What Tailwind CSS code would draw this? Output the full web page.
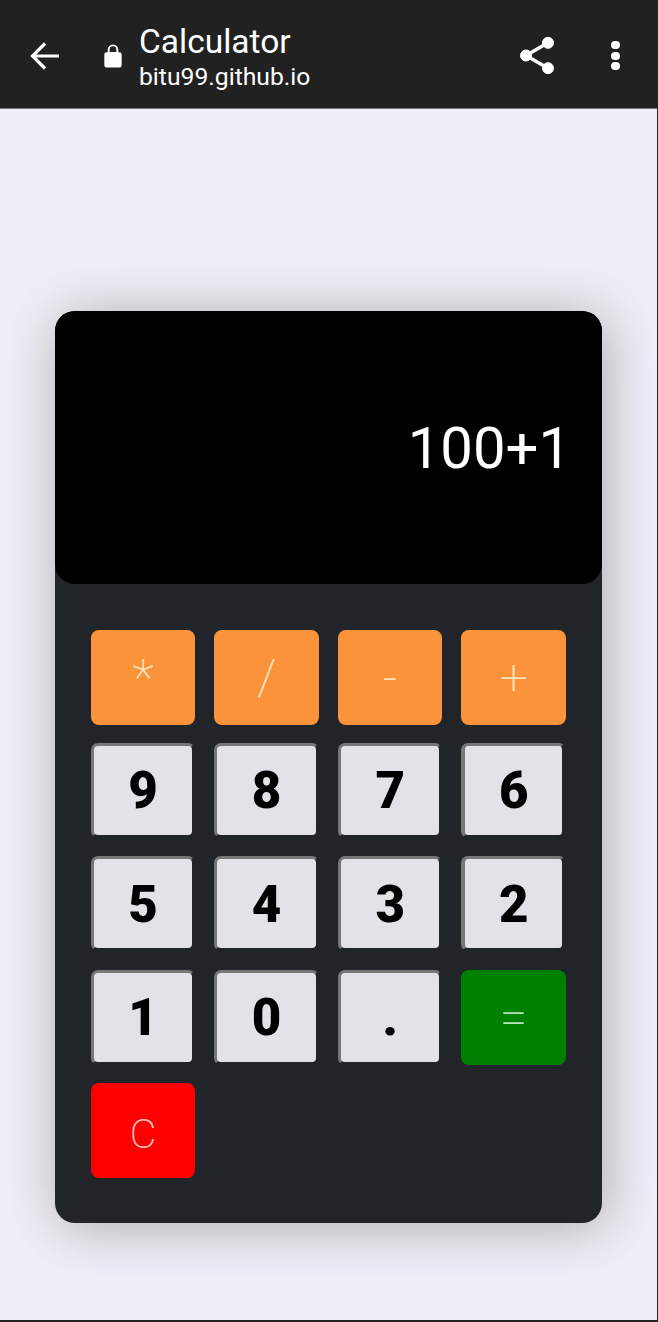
<!DOCTYPE html>
<html lang="en">
<head>
  <meta charset="UTF-8" />
  <meta name="viewport" content="width=device-width, initial-scale=1.0" />
  <title>Calculator</title>
  <script src="https://cdn.jsdelivr.net/npm/@tailwindcss/browser@4"></script>
</head>
<body class="bg-[#eeeff9] font-['Roboto',sans-serif] overflow-hidden">
  <div class="w-[658px] h-[1322px] flex flex-col border-r border-b-2 border-[#222]">
    <!-- browser toolbar -->
    <header class="h-[109px] shrink-0 bg-[#212121] border-b border-[#77777d] flex items-center text-white">
      <svg class="ml-[30px] mt-[3px] w-[29px] h-[28px]" viewBox="0 0 29 28" fill="none" stroke="#fff" stroke-width="3.2">
        <path d="M29 14H3M15 1.500 2.500 14 15 26.500" />
      </svg>
      <svg class="ml-[45px] w-[18px] h-[25px] mt-[3px]" viewBox="0 0 18 26" fill="#fff">
        <path d="M3.500 9.500V7a5.500 5.500 0 0 1 11 0v2.500h1.200A2.300 2.300 0 0 1 18 11.800v11.400a2.300 2.300 0 0 1-2.300 2.300H2.300A2.300 2.300 0 0 1 0 23.200V11.800a2.300 2.300 0 0 1 2.300-2.300zm2-.2h7V7a3.500 3.500 0 0 0-7 0z" />
      </svg>
      <div class="ml-[17px] mt-[6px] flex flex-col">
        <div class="text-[33.500px] leading-[40px]">Calculator</div>
        <div class="text-[24.700px] leading-[30px]">bitu99.github.io</div>
      </div>
      <svg class="ml-auto mt-[3px] w-[34px] h-[37px]" viewBox="0 0 34 37" fill="#fff" stroke="#fff">
        <circle cx="6" cy="18.500" r="5.500" />
        <circle cx="28" cy="5.800" r="5.500" />
        <circle cx="28" cy="31.200" r="5.500" />
        <path d="M6 18.500 28 5.800M6 18.500l22 12.700" fill="none" stroke-width="3.400" />
      </svg>
      <div class="ml-[57px] mr-[37px] mt-[3px] flex flex-col gap-[2.500px]">
        <span class="block w-[9px] h-[8px] rounded-full bg-white"></span>
        <span class="block w-[9px] h-[8px] rounded-full bg-white"></span>
        <span class="block w-[9px] h-[8px] rounded-full bg-white"></span>
      </div>
    </header>

    <main class="px-[55px] pt-[202px]">
      <div class="w-[547px] h-[912px] rounded-[20px] bg-[#212529] shadow-[4px_4px_54px_rgba(0,0,0,0.3),2px_2px_30px_16px_rgba(243,241,244,0.9)]">
        <div class="h-[273px] rounded-[20px] bg-black text-white flex items-center justify-end pr-[31px] pt-[2px] text-[58px] font-normal">100+1</div>
        <div class="pl-[35.800px] pr-[36px] pt-[46px] grid grid-cols-4 gap-x-[19px] gap-y-[18.200px] auto-rows-[95px]">
          <button class="rounded-[8px] bg-[#fa9339] text-[#ffe3bd] text-[50px] font-extralight pt-[2px]">*</button>
          <button class="rounded-[8px] bg-[#fa9339] text-[#ffe3bd] text-[50px] font-extralight pt-[2px]">/</button>
          <button class="rounded-[8px] bg-[#fa9339] text-[#ffe3bd] text-[50px] font-extralight pt-[2px]">-</button>
          <button class="rounded-[8px] bg-[#fa9339] text-[#ffe3bd] text-[50px] font-extralight pt-[2px]">+</button>
          <button class="rounded-[7px] bg-[#e3e2e6] border-[3px] border-t-[#777] border-l-[#777] border-r-[#212529] border-b-[#212529] text-black text-[51px] font-black pt-[2px]">9</button>
          <button class="rounded-[7px] bg-[#e3e2e6] border-[3px] border-t-[#777] border-l-[#777] border-r-[#212529] border-b-[#212529] text-black text-[51px] font-black pt-[2px]">8</button>
          <button class="rounded-[7px] bg-[#e3e2e6] border-[3px] border-t-[#777] border-l-[#777] border-r-[#212529] border-b-[#212529] text-black text-[51px] font-black pt-[2px]">7</button>
          <button class="rounded-[7px] bg-[#e3e2e6] border-[4px] border-t-[3px] border-b-[3px] border-t-[#777] border-l-[#777] border-r-[#212529] border-b-[#212529] text-black text-[51px] font-black pt-[2px]">6</button>
          <button class="rounded-[7px] bg-[#e3e2e6] border-[3px] border-t-[#777] border-l-[#777] border-r-[#212529] border-b-[#212529] text-black text-[51px] font-black pt-[2px]">5</button>
          <button class="rounded-[7px] bg-[#e3e2e6] border-[3px] border-t-[#777] border-l-[#777] border-r-[#212529] border-b-[#212529] text-black text-[51px] font-black pt-[2px]">4</button>
          <button class="rounded-[7px] bg-[#e3e2e6] border-[3px] border-t-[#777] border-l-[#777] border-r-[#212529] border-b-[#212529] text-black text-[51px] font-black pt-[2px]">3</button>
          <button class="rounded-[7px] bg-[#e3e2e6] border-[4px] border-t-[3px] border-b-[3px] border-t-[#777] border-l-[#777] border-r-[#212529] border-b-[#212529] text-black text-[51px] font-black pt-[2px]">2</button>
          <button class="rounded-[7px] bg-[#e3e2e6] border-[3px] border-t-[#777] border-l-[#777] border-r-[#212529] border-b-[#212529] text-black text-[51px] font-black pt-[2px]">1</button>
          <button class="rounded-[7px] bg-[#e3e2e6] border-[3px] border-t-[#777] border-l-[#777] border-r-[#212529] border-b-[#212529] text-black text-[51px] font-black pt-[2px]">0</button>
          <button class="rounded-[7px] bg-[#e3e2e6] border-[3px] border-t-[#777] border-l-[#777] border-r-[#212529] border-b-[#212529] text-black text-[51px] font-black pt-[2px]">.</button>
          <button class="rounded-[8px] bg-[#008000] text-[#b9e6b9] text-[50px] font-extralight pt-[2px]">=</button>
          <button class="rounded-[8px] bg-[#ff0000] text-[#ffc8c8] text-[41px] font-extralight pt-[9px]">C</button>
        </div>
      </div>
    </main>
  </div>
</body>
</html>
